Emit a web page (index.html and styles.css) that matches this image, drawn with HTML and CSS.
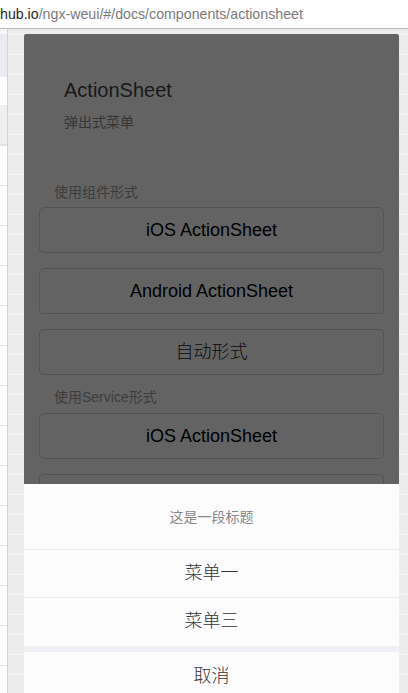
FILE: index.html
```html
<!DOCTYPE html>
<html lang="zh-CN">
<head>
  <meta charset="UTF-8">
  <meta name="viewport" content="width=device-width, initial-scale=1.0">
  <title>ActionSheet</title>
  <link rel="stylesheet" href="styles.css">
</head>
<body>
  <div class="address-bar">
    <span class="host">hub.io</span><span class="path">/ngx-weui/#/docs/components/actionsheet</span>
  </div>

  <div class="workspace">
    <div class="sidebar">
      <div class="side-gap"></div>
      <div class="side-active"></div>
      <div class="side-row"></div>
      <div class="side-hl"></div>
    </div>

    <div class="phone">
      <div class="page-hd">
        <h1 class="page-title">ActionSheet</h1>
        <p class="page-desc">弹出式菜单</p>
      </div>

      <div class="section-title">使用组件形式</div>
      <div class="btn-area">
        <a class="btn">iOS ActionSheet</a>
        <a class="btn">Android ActionSheet</a>
        <a class="btn cjk">自动形式</a>
      </div>

      <div class="section-title">使用Service形式</div>
      <div class="btn-area">
        <a class="btn">iOS ActionSheet</a>
        <a class="btn">Android ActionSheet</a>
      </div>

      <!-- mask + sheet sit over the page -->
      <div class="mask"></div>
      <div class="actionsheet">
        <div class="sheet-menu">
          <div class="sheet-title">这是一段标题</div>
          <div class="sheet-cell">菜单一</div>
          <div class="sheet-cell">菜单三</div>
        </div>
        <div class="sheet-action">
          <div class="sheet-cell">取消</div>
        </div>
      </div>
    </div>
  </div>
</body>
</html>
```

FILE: styles.css
```css
html, body {
  margin: 0;
  padding: 0;
  height: 100%;
  overflow: hidden;
}
body {
  font-family: "Liberation Sans", "Noto Sans CJK SC", sans-serif;
  background-color: #ececec;
}

/* browser address bar */
.address-bar {
  height: 28px;
  line-height: 29px;
  font-size: 14.2px;
  background-color: #fff;
  border-bottom: 1px solid #bcbcbc;
  white-space: nowrap;
  overflow: hidden;
}
.host {
  color: #1f1f1f;
}
.path {
  color: #7a7a7a;
}

/* docs page underneath */
.workspace {
  display: flex;
  align-items: flex-start;
  height: calc(100% - 29px);
  overflow: hidden;
  background-color: #ececec;
  background-image: linear-gradient(to bottom, transparent 19px, #f5f5f5 19px);
  background-size: 100% 20px;
  background-position: 0 6px;
}
.sidebar {
  width: 7px;
  height: 100%;
  flex-shrink: 0;
  background-color: #fff;
  background-image: linear-gradient(to bottom, transparent 39px, #e6e6e6 39px);
  background-size: 100% 40px;
  background-position: 0 37px;
  border-right: 1px solid #d3d3d3;
  margin-right: 16px;
}
.side-gap {
  height: 5px;
  background-color: #f7f7f7;
}
.side-active {
  height: 43px;
  background-color: #ebebf3;
}
.side-row {
  height: 28px;
  background-color: #fff;
}
.side-hl {
  height: 39px;
  background-color: #efefef;
  border-bottom: 1px solid #e3e3e3;
}

/* phone frame */
.phone {
  position: relative;
  width: 375px;
  height: 667px;
  margin-top: 5px;
  flex-shrink: 0;
  overflow: hidden;
  border-radius: 2px 2px 0 0;
  background-color: #f8f8f8;
}
.page-hd {
  padding: 40px 40px 37px;
}
.page-title {
  margin: 0;
  font-size: 20px;
  font-weight: 400;
  line-height: 32px;
  color: #3d4145;
}
.page-desc {
  margin: 5px 0 0;
  font-size: 14px;
  line-height: 22px;
  color: #888;
}
.section-title {
  margin: 11px 15px 4px;
  padding: 0 15px;
  font-size: 14px;
  line-height: 1.6;
  color: #999;
}
.btn-area {
  display: flex;
  flex-direction: column;
  gap: 15px;
  margin: 0 15px;
}
.btn {
  display: block;
  height: 44px;
  line-height: 44px;
  text-align: center;
  font-size: 18px;
  color: #000;
  background-color: #f8f8f8;
  border: 1px solid rgba(0, 0, 0, 0.15);
  border-radius: 5px;
}
.btn.cjk {
  color: #222;
  font-weight: 300;
}

.mask {
  position: absolute;
  top: 0;
  right: 0;
  bottom: 0;
  left: 0;
  background-color: rgba(0, 0, 0, 0.6);
}
.actionsheet {
  position: absolute;
  left: 0;
  right: 0;
  bottom: 0;
  background-color: #efeff4;
}
.sheet-title {
  height: 65px;
  display: flex;
  align-items: center;
  justify-content: center;
  font-size: 14px;
  color: #888;
  background-color: #fcfcfd;
}
.sheet-cell {
  padding: 10px 0;
  font-size: 18px;
  line-height: 28.8px;
  text-align: center;
  color: #333;
  font-weight: 300;
  background-color: #fcfcfd;
  box-shadow: inset 0 1px 0 #ececec;
}
.sheet-action {
  margin-top: 6px;
}
.sheet-action .sheet-cell {
  box-shadow: none;
}
```
